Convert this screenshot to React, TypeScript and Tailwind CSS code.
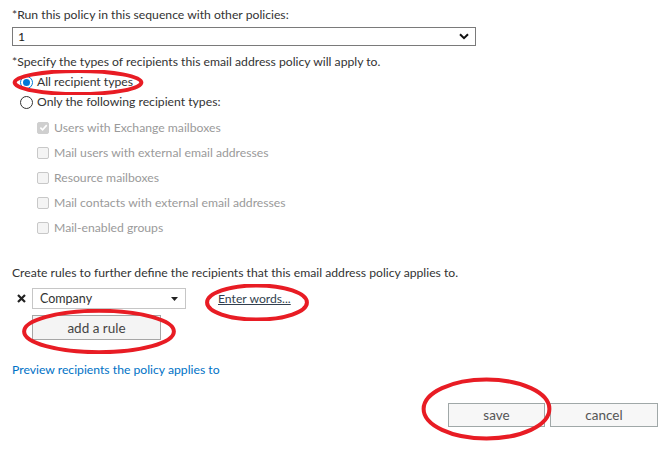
import React from 'react';

const font = { fontFamily: 'Lato, "Open Sans", sans-serif' };

const types = [
  { label: 'Users with Exchange mailboxes', checked: true },
  { label: 'Mail users with external email addresses', checked: false },
  { label: 'Resource mailboxes', checked: false },
  { label: 'Mail contacts with external email addresses', checked: false },
  { label: 'Mail-enabled groups', checked: false },
];

const Ring: React.FC<{ className: string }> = ({ className }) => (
  <svg className={`absolute pointer-events-none ${className}`} viewBox="0 0 100 100" preserveAspectRatio="none">
    <ellipse cx="50" cy="50" rx="48" ry="46" fill="none" stroke="#e81c24" strokeWidth="4" vectorEffect="non-scaling-stroke" />
  </svg>
);

const DisabledBox: React.FC<{ checked: boolean }> = ({ checked }) => (
  <span className={`flex h-[12px] w-[12px] items-center justify-center rounded-[2px] border ${checked ? 'border-[#cfcfcf] bg-[#cfcfcf]' : 'border-[#c8c8c8] bg-[#f4f4f4]'}`}>
    {checked && (
      <svg width="9" height="9" viewBox="0 0 10 10">
        <path d="M1.5 5.2 L4 7.6 L8.6 2.4" fill="none" stroke="#fff" strokeWidth="1.8" />
      </svg>
    )}
  </span>
);

export default function App() {
  return (
    <div className="relative h-[475px] w-[664px] overflow-hidden bg-white text-[12.2px] leading-[16px] text-[#333]" style={font}>
      <div className="px-3 pt-[7px]">
        <div>*Run this policy in this sequence with other policies:</div>
        <div className="mt-[4px] flex h-[19px] w-[464px] items-center justify-between border border-[#7a7a7a] pl-[5px] pr-[6px]">
          <span className="text-[#1a1a1a]">1</span>
          <svg width="10" height="7" viewBox="0 0 10 7">
            <path d="M1 1.2 L5 5.2 L9 1.2" fill="none" stroke="#111" strokeWidth="2" />
          </svg>
        </div>

        <div className="mt-[8px]">*Specify the types of recipients this email address policy will apply to.</div>
        <div className="mt-[2px] flex h-[20px] items-center gap-[4px] pl-[8px]">
          <span className="flex h-[13px] w-[13px] items-center justify-center rounded-full border border-[#0078d7]">
            <span className="h-[7px] w-[7px] rounded-full bg-[#0078d7]" />
          </span>
          <span>All recipient types</span>
        </div>
        <div className="flex h-[20px] items-center gap-[4px] pl-[8px]">
          <span className="h-[13px] w-[13px] rounded-full border border-[#333]" />
          <span>Only the following recipient types:</span>
        </div>

        <div className="mt-[3px] pl-[25px]">
          {types.map((t) => (
            <div key={t.label} className="flex h-[25px] items-center gap-[5px] text-[#9a9a9a]">
              <DisabledBox checked={t.checked} />
              <span>{t.label}</span>
            </div>
          ))}
        </div>

        <div className="mt-[25px]">Create rules to further define the recipients that this email address policy applies to.</div>
        <div className="mt-[7px] flex items-center">
          <svg className="ml-[5px] mr-[6px]" width="9" height="9" viewBox="0 0 9 9">
            <path d="M1 1 L8 8 M8 1 L1 8" stroke="#222" strokeWidth="2.2" />
          </svg>
          <div className="flex h-[21px] w-[154px] items-center justify-between border border-[#c6c6c6] pl-[7px] pr-[7px]">
            <span className="text-[12.5px]">Company</span>
            <svg width="7" height="4" viewBox="0 0 7 4">
              <path d="M0 0 L7 0 L3.5 4 Z" fill="#222" />
            </svg>
          </div>
          <a className="ml-[32px] text-[#333f4f] underline">Enter words...</a>
        </div>
        <button className="ml-[20px] mt-[6px] h-[25px] w-[129px] border border-[#a6a6a6] bg-[#f4f4f4] text-[13.5px] text-[#444]" style={font}>
          add a rule
        </button>
        <div className="mt-[22px] text-[#0072c6]">Preview recipients the policy applies to</div>

        <div className="mt-[25px] flex justify-end gap-[5px]">
          <button className="h-[24px] w-[97px] border border-[#a0a8a8] bg-[#f7f7f7] text-[13.5px] text-[#555]" style={font}>save</button>
          <button className="mr-[-6px] h-[24px] w-[108px] border border-[#a0a8a8] bg-[#f7f7f7] text-[13.5px] text-[#555]" style={font}>cancel</button>
        </div>
      </div>

      <Ring className="left-[12px] top-[70px] h-[25px] w-[132px]" />
      <Ring className="left-[21px] top-[309px] h-[45px] w-[156px]" />
      <Ring className="left-[205px] top-[284px] h-[37px] w-[104px]" />
      <Ring className="left-[421px] top-[377px] h-[64px] w-[131px]" />
    </div>
  );
}
